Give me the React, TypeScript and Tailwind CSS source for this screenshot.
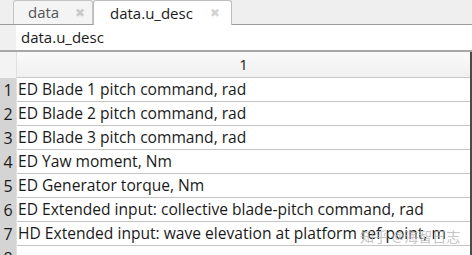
const rows = [
  "ED Blade 1 pitch command, rad",
  "ED Blade 2 pitch command, rad",
  "ED Blade 3 pitch command, rad",
  "ED Yaw moment, Nm",
  "ED Generator torque, Nm",
  "ED Extended input: collective blade-pitch command, rad",
  "HD Extended input: wave elevation at platform ref point, m",
];

const font = { fontFamily: '"Open Sans", "Noto Sans CJK SC", sans-serif' };

export default function App() {
  return (
    <div
      className="w-[472px] h-[255px] overflow-hidden bg-white text-[15.6px] text-[#1a1a1a] relative"
      style={font}
    >
      {/* tabs */}
      <div className="h-[25px] bg-[#efefef] border-b border-[#9a9a9a] flex items-end pl-[13px] text-[15px]">
        <div className="h-[24px] w-[80px] flex items-center justify-between pl-[14px] pr-[7px] border border-b-0 border-[#c4c4c4] rounded-t-[3px] bg-[#f4f4f4] text-[#555]">
          <span>data</span>
          <span className="text-[#cacaca] text-[12px]">✖</span>
        </div>
        <div className="h-[25px] w-[139px] -mb-px flex items-center justify-between pl-[16px] pr-[11px] border border-b-0 border-[#bdbdbd] rounded-t-[3px] bg-white">
          <span>data.u_desc</span>
          <span className="text-[#d4d4d4] text-[12px]">✖</span>
        </div>
      </div>

      {/* address */}
      <div className="h-[27px] flex border-b-2 border-[#a8a8a8]">
        <div className="w-[16px] bg-[#f0f0f0]" />
        <div className="flex-1 flex items-center pl-[5px] text-[15px]">data.u_desc</div>
      </div>

      {/* grid */}
      <div className="flex">
        <div className="w-[16px] flex flex-col bg-[#d4d4d4] text-[16px]">
          <div className="h-[26px] bg-[#f3f3f3]" />
          {rows.map((_, i) => (
            <div key={i} className="h-[24px] flex items-center justify-center">
              {i + 1}
            </div>
          ))}
          <div className="h-[24px] flex items-center justify-center">8</div>
        </div>
        <div className="w-[454px] flex flex-col border-l border-[#e0e0e0]">
          <div className="h-[26px] flex items-center justify-center bg-gradient-to-b from-[#fafafa] to-[#f0f0f0] border-b border-[#c8c8c8] text-[15px]">
            1
          </div>
          {rows.map((r, i) => (
            <div
              key={i}
              className="h-[24px] flex items-center pl-[1px] border-b border-[#c4c4c4] whitespace-nowrap overflow-hidden"
            >
              {r}
            </div>
          ))}
        </div>
        <div className="w-[2px] bg-[#4a4a4a]" />
      </div>

      <div className="absolute left-[360px] top-[226px] text-[14px] text-[#b8b8b8] opacity-80">
        知乎 @海智日志
      </div>
    </div>
  );
}
